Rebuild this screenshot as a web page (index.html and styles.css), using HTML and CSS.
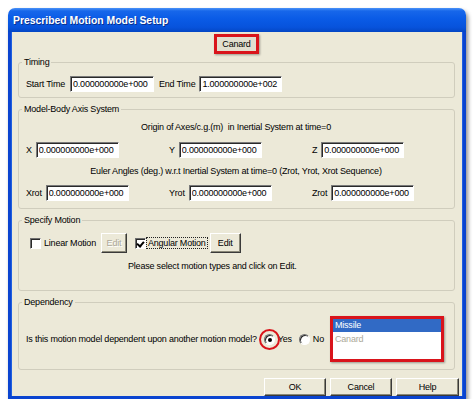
FILE: index.html
```html
<!DOCTYPE html>
<html lang="en">
    <head>
        <meta charset="UTF-8">
        <meta name="viewport" content="width=device-width, initial-scale=1.0">
        <title>Prescribed Motion Model Setup</title>
        <link rel="stylesheet" href="styles.css">
    </head>
    <body>
        <div class="window">
            <div class="titlebar">Prescribed Motion Model Setup</div>
            <div class="client">
                <div class="header"><span class="tag">Canard</span></div>

                <fieldset class="group timing">
                    <legend>Timing</legend>
                    <div class="row">
                        <label>Start Time</label>
                        <input class="field wide" value="0.000000000e+000" readonly>
                        <label class="after">End Time</label>
                        <input class="field" value="1.000000000e+002" readonly>
                    </div>
                </fieldset>

                <fieldset class="group axis">
                    <legend>Model-Body Axis System</legend>
                    <p class="caption">Origin of Axes/c.g.(m)&nbsp; in Inertial System at time=0</p>
                    <div class="axes first">
                        <div class="pair"><label>X</label><input class="field" value="0.000000000e+000" readonly></div>
                        <div class="pair"><label>Y</label><input class="field" value="0.000000000e+000" readonly></div>
                        <div class="pair"><label>Z</label><input class="field" value="0.000000000e+000" readonly></div>
                    </div>
                    <p class="caption second">Euler Angles (deg.) w.r.t Inertial System at time=0 (Zrot, Yrot, Xrot Sequence)</p>
                    <div class="axes">
                        <div class="pair"><label>Xrot</label><input class="field" value="0.000000000e+000" readonly></div>
                        <div class="pair"><label>Yrot</label><input class="field" value="0.000000000e+000" readonly></div>
                        <div class="pair"><label>Zrot</label><input class="field" value="0.000000000e+000" readonly></div>
                    </div>
                </fieldset>

                <fieldset class="group motion">
                    <legend>Specify Motion</legend>
                    <div class="row">
                        <span class="check"></span>
                        <label class="check-label">Linear Motion</label>
                        <button class="btn small" disabled>Edit</button>
                        <span class="check checked"></span>
                        <label class="check-label focus">Angular Motion</label>
                        <button class="btn edit">Edit</button>
                    </div>
                    <p class="note">Please select motion types and click on Edit.</p>
                </fieldset>

                <fieldset class="group dependency">
                    <legend>Dependency</legend>
                    <div class="row">
                        <span class="question">Is this motion model dependent upon another motion model?</span>
                        <span class="radio selected marked"></span>
                        <label class="radio-label">Yes</label>
                        <span class="radio"></span>
                        <label class="radio-label">No</label>
                        <div class="listframe">
                            <ul class="listbox">
                                <li class="active">Missile</li>
                                <li class="muted">Canard</li>
                            </ul>
                        </div>
                    </div>
                </fieldset>

                <div class="actions">
                    <button class="btn">OK</button>
                    <button class="btn">Cancel</button>
                    <button class="btn">Help</button>
                </div>
            </div>
        </div>
    </body>
</html>
```

FILE: styles.css
```css
body {
    margin: 0;
    background-color: white;
    font-family: "Liberation Sans", Arial, sans-serif;
    font-size: 9px;
    letter-spacing: -0.2px;
    color: black;
}

.window {
    margin: 8px 0 0 8px;
    width: 458px;
    border-radius: 7px 7px 0 0;
    box-shadow: 2px 3px 4px rgba(0, 0, 0, 0.45);
}

.titlebar {
    height: 24px;
    line-height: 26px;
    padding-left: 5px;
    color: white;
    font-size: 10.4px;
    font-weight: bold;
    letter-spacing: 0;
    border-radius: 7px 7px 0 0;
    background: linear-gradient(#4a92f8 0, #1767ea 3px, #0a5be6 45%, #0753dc 80%, #0446c4 100%);
    text-shadow: 1px 1px 0 #0a2f8c;
}

.client {
    background-color: #ece9d8;
    border: 3px solid #0a44d0;
    border-top: 0;
    box-shadow: inset 1px 0 0 #1f5fe0, inset -1px 0 0 #1f5fe0;
    padding: 0 8px 0 7px;
}

.header {
    display: flex;
    justify-content: center;
    padding-top: 2px;
}

.tag {
    display: inline-block;
    height: 14px;
    line-height: 14px;
    padding: 0 5px;
    border: 3px solid #d9141b;
    background-color: #e2dfcf;
    box-shadow: 1px 1px 2px rgba(0, 0, 0, 0.35);
}

.group {
    margin: 6px 0 0 0;
    border: 1px solid #d0cdbd;
    border-radius: 3px;
    padding: 7px 0 7px 7px;
    min-width: 0;
}

.group legend {
    line-height: 11px;
    padding: 0 2px;
    margin-left: -4px;
}

.timing {
    margin-top: 3px;
    padding-top: 8px;
    padding-bottom: 5px;
}

.row {
    display: flex;
    align-items: center;
}

label {
    white-space: nowrap;
}

.field {
    box-sizing: border-box;
    width: 83px;
    height: 16px;
    margin: 0;
    padding: 0 2px;
    font: inherit;
    letter-spacing: -0.2px;
    background-color: white;
    border: 1px solid;
    border-color: #7a7a7a #ffffff #ffffff #7a7a7a;
    box-shadow: inset 1px 1px 0 #2a2a2a;
    outline: none;
}

.timing label {
    margin-right: 5px;
}

.timing .field.wide {
    width: 84px;
}

.timing .after {
    margin-left: 5px;
    margin-right: 4px;
}

.caption {
    margin: 0;
    line-height: 11px;
    text-align: center;
    padding-right: 8px;
}

.caption.second {
    margin-top: 8px;
}

.axes {
    display: grid;
    grid-template-columns: repeat(3, 143px);
    margin-top: 8px;
}

.axes.first {
    margin-top: 9px;
}

.pair {
    display: flex;
    align-items: center;
    gap: 4px;
}

.motion {
    padding-bottom: 18px;
}

.motion .row {
    height: 20px;
}

.check {
    box-sizing: border-box;
    width: 11px;
    height: 11px;
    margin-left: 4px;
    background-color: white;
    border: 1px solid;
    border-color: #6f6f6f #ffffff #ffffff #6f6f6f;
    box-shadow: inset 1px 1px 0 #2a2a2a;
    position: relative;
}

.check.checked {
    margin-left: 8px;
}

.check.checked::after {
    content: "";
    position: absolute;
    left: 2px;
    top: 1px;
    width: 3px;
    height: 5px;
    border: solid black;
    border-width: 0 2px 2px 0;
    transform: rotate(40deg);
}

.check-label {
    margin-left: 3px;
    margin-right: 5px;
}

.check-label.focus {
    margin-left: 1px;
    margin-right: 3px;
    padding: 0 1px;
    outline: 1px dotted #222;
}

.btn {
    box-sizing: border-box;
    height: 18px;
    width: 62px;
    margin: 0;
    padding: 0;
    font: inherit;
    letter-spacing: -0.2px;
    color: black;
    background-color: #ece9d8;
    border: 1px solid;
    border-color: #ffffff #3a3a3a #3a3a3a #ffffff;
    box-shadow: inset -1px -1px 0 #8a8878;
}

.motion .btn {
    height: 20px;
}

.btn.small {
    width: 26px;
}

.btn:disabled {
    color: #aca899;
    text-shadow: 1px 1px 0 #ffffff;
}

.btn.edit {
    width: 31px;
}

.note {
    margin: 8px 0 0 102px;
    line-height: 11px;
}

.dependency {
    padding-top: 8px;
}

.dependency .row {
    height: 46px;
}

.question {
    white-space: nowrap;
}

.radio {
    box-sizing: border-box;
    width: 11px;
    height: 11px;
    margin-left: 7px;
    border-radius: 50%;
    background-color: white;
    border: 1px solid;
    border-color: #6f6f6f #ffffff #ffffff #6f6f6f;
    box-shadow: inset 1px 1px 0 #2a2a2a;
    position: relative;
}

.radio.selected::before {
    content: "";
    position: absolute;
    left: 3px;
    top: 3px;
    width: 4px;
    height: 4px;
    border-radius: 50%;
    background-color: black;
}

.radio.marked::after {
    content: "";
    position: absolute;
    left: -6px;
    top: -6px;
    width: 17px;
    height: 17px;
    border: 2px solid #d9141b;
    border-radius: 50%;
}

.radio-label {
    margin-left: 3px;
}

.listframe {
    margin-left: 6px;
    width: 108px;
    height: 40px;
    border: 3px solid #d9141b;
    box-shadow: 1px 1px 2px rgba(0, 0, 0, 0.35);
}

.listbox {
    list-style: none;
    margin: 0;
    padding: 0;
    height: 100%;
    background-color: white;
}

.listbox li {
    height: 13px;
    line-height: 13px;
    padding-left: 2px;
}

.listbox .active {
    background-color: #316ac5;
    color: white;
}

.listbox .muted {
    margin-top: 1px;
    color: #aca899;
}

.actions {
    display: flex;
    justify-content: flex-end;
    gap: 4px;
    margin: 8px -4px 0 0;
}

.actions .btn:last-child {
    width: 63px;
}
```
